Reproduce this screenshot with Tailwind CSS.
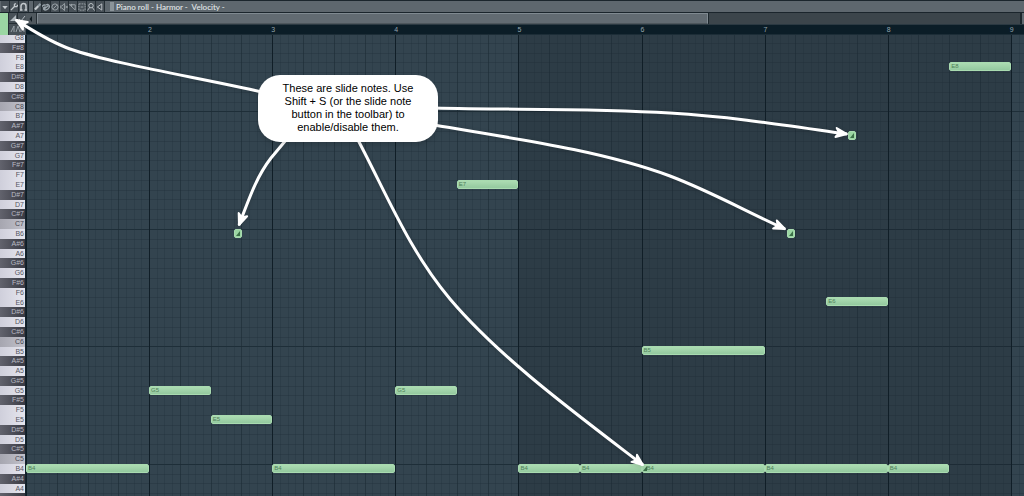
<!DOCTYPE html>
<html lang="en">
<head>
    <meta charset="UTF-8">
    <meta name="viewport" content="width=device-width, initial-scale=1.0">
    <title>Piano roll</title>
    <script src="https://cdn.jsdelivr.net/npm/@tailwindcss/browser@4"></script>
</head>
<body class="relative bg-[#33444f] font-['Liberation_Sans',sans-serif] overflow-x-hidden">
    <!-- Toolbar -->
    <header class="flex items-center h-[13px] bg-[#5e676e] border-t border-b border-[#1b252c] text-[#c3c9cd]">
        <div class="flex h-full pl-px">
            <button aria-label="Menu" class="w-[9px] bg-[#485158] border-r border-[#252e34]"><svg viewBox="0 0 9 9" class="w-full" fill="currentColor"><path d="M1.500 3.500h6L4.500 7z"/></svg></button>
            <button aria-label="Tools" class="w-[9px] bg-[#485158] border-r border-[#252e34]"><svg viewBox="0 0 9 9" class="w-full" fill="none" stroke="currentColor" stroke-width="1.500"><path d="M1 8l4-4M5 1v3h3M5 1.500l1.500-1M8 4l.5-2"/></svg></button>
            <button aria-label="Snap" class="w-[10px] bg-[#485158] border-r border-[#252e34]"><svg viewBox="0 0 9 9" class="w-full" fill="none" stroke="currentColor" stroke-width="1.500"><path d="M2 8.500V4a2.500 2.500 0 0 1 5 0v4.500M1 8h2.500M5.500 8H8"/></svg></button>
        </div>
        <div class="flex h-full ml-1 mr-1">
            <button aria-label="Draw" class="w-[9px] bg-[#485158] border-x border-[#252e34]"><svg viewBox="0 0 8 9" class="w-full" fill="none" stroke="currentColor" stroke-width="2.500"><path d="M1 7.500l4-4"/><path d="M5 3.500L7.500 1" stroke="#8f9ba3"/></svg></button>
            <button aria-label="Paint" class="w-[9px] bg-[#323a40] border-r border-[#252e34]"><svg viewBox="0 0 9 9" class="w-full" fill="none" stroke="#9aa4ab"><path d="M0 4c2-3 3-1 5-2s4 1 3 3-4 4-6 2l5-4M1 6l3-2" stroke-width="1.500"/></svg></button>
            <button aria-label="Delete" class="w-[9px] bg-[#485158] border-r border-[#252e34]"><svg viewBox="0 0 9 9" class="w-full" fill="none" stroke="#a1a9ae"><circle cx="4.500" cy="4.500" r="3.500"/><path d="M2.500 6.500l4-4"/></svg></button>
            <button aria-label="Mute" class="w-[9px] bg-[#485158] border-r border-[#252e34]"><svg viewBox="0 0 9 9" class="w-full" fill="none" stroke="#a1a9ae"><path d="M0 3.500h2l3-3v8l-3-3H0zM6 3l3 3M9 3L6 6"/></svg></button>
            <button aria-label="Slip" class="w-[9px] bg-[#485158] border-r border-[#252e34]"><svg viewBox="0 0 9 9" class="w-full" fill="none" stroke="#a1a9ae"><path d="M0 2h7v6M1 2l6 6M3 1v3"/></svg></button>
            <button aria-label="Select" class="w-[9px] bg-[#485158] border-r border-[#252e34]"><svg viewBox="0 0 9 9" class="w-full" fill="none" stroke="#a1a9ae"><path d="M1 1h7v7H1z" stroke-dasharray="2 1"/><path d="M3 4.500h3"/></svg></button>
            <button aria-label="Zoom" class="w-[9px] bg-[#485158] border-r border-[#252e34]"><svg viewBox="0 0 9 9" class="w-full" fill="none" stroke="currentColor"><circle cx="4.500" cy="3" r="2.500"/><path d="M3 5L.5 8.500M6 5l2.500 3.500"/></svg></button>
            <button aria-label="Play" class="w-[9px] bg-[#485158] border-r border-[#252e34]"><svg viewBox="0 0 9 9" class="w-full" fill="none" stroke="currentColor"><path d="M1.500 4.500L6.500 1v7z"/></svg></button>
        </div>
        <span class="w-1 h-[9px] ml-px bg-[#8b949a]"></span>
        <h1 class="ml-[2px] text-[8px] leading-[10px] font-medium whitespace-pre font-['Lato',sans-serif] text-[#e3e7ea]">Piano roll - Harmor -  Velocity -</h1>
    </header>

    <div class="flex h-[22px] bg-[#1f2b33]">
        <!-- Note colour and slide / porta switches -->
        <div class="w-2 bg-[#9bd6a3]"></div>
        <div class="w-[18px] flex flex-col border-l border-[#252e34] bg-[#485158] text-[#b4bcc1]">
            <div class="flex h-[11px] border-b border-[#252e34]">
                <button aria-label="Slide notes" class="flex-1 border-r border-[#252e34]"><svg viewBox="0 0 8 9" class="w-full" fill="currentColor"><path d="M1 7h6V1z"/></svg></button>
                <button aria-label="Portamento" class="flex-1"><svg viewBox="0 0 8 9" class="w-full" fill="none" stroke="currentColor"><path d="M1 5l2 2 4-5"/></svg></button>
            </div>
            <svg viewBox="0 0 17 10" class="w-full" fill="none" stroke="#98a1a7"><path d="M2 8l3-6v6M7 8l2-6 2 6M12 2v6M12 3l3 1v4"/></svg>
        </div>
        <div class="flex-1 min-w-0">
            <!-- Scroll bar -->
            <div class="flex h-[11px] bg-[#3c454b]">
                <button aria-label="Scroll left" class="w-[11px] shrink-0 bg-[#50595f] border-r border-[#252e34]"><svg viewBox="0 0 10 10" class="w-full" fill="#101a20"><path d="M6 2v6L3.500 5z"/></svg></button>
                <div class="w-[67.2%] bg-[#626b72] border border-[#808a91] border-b-[#4d565c]"></div>
                <div class="flex-1 border-l border-[#1c262c]"></div>
                <button aria-label="Scroll right" class="w-1 shrink-0 bg-[#626b72] border-l-2 border-[#1c262c]"></button>
            </div>
            <div id="ruler" class="relative h-[11px] bg-[#0b1d27] border-t border-[#2b3942] border-b border-b-[#1c2d37] text-[7px] leading-[9px] text-[#93a3ac]"></div>
        </div>
    </div>

    <main class="flex h-[461px] overflow-hidden">
        <div id="keys" class="flex flex-col w-[26px] h-[470px] -mt-[2px] text-[7px] leading-[10px] border-r border-[#15232c]"></div>
        <div id="roll" class="relative flex-1 h-[470px] -mt-[2px] bg-[#33444f]"></div>
    </main>

    <!-- Callout with its arrows -->
    <svg class="absolute left-0 top-0 w-[1024px] h-[496px] pointer-events-none drop-shadow-sm" viewBox="0 0 1024 496" fill="none" stroke="white" stroke-width="3" stroke-linejoin="round">
        <defs>
            <marker id="head" viewBox="0 0 14 12" refX="13" refY="6" markerWidth="14" markerHeight="12" markerUnits="userSpaceOnUse" orient="auto">
                <path d="M2 1.500L13 6 2 10.500 5 6z" fill="white" stroke="white" stroke-width="2"/>
            </marker>
        </defs>
        <path marker-end="url(#head)" d="M262 92C200 78 110 63 70 49C48 41 32 30 16 20"/>
        <path marker-end="url(#head)" d="M286 140L271 158C257 176 250 196 239 225"/>
        <path marker-end="url(#head)" d="M358 140C388 197 409 250 450 299C500 358 575 413 643 465"/>
        <path marker-end="url(#head)" d="M434 108C510 110 590 108 670 113C735 117 790 126 847 134"/>
        <path marker-end="url(#head)" d="M434 125C510 138 600 150 670 176C712 192 745 211 785 229"/>
    </svg>
    <p class="absolute left-[258px] top-[75px] w-[180px] h-[67px] rounded-[22px] bg-white pt-[7px] text-center text-[11px] leading-[13px] text-black shadow-md">These are slide notes. Use<br>Shift + S (or the slide note<br>button in the toolbar) to<br>enable/disable them.</p>

    <script>
        const BAR = 12.335; // width of one bar, percent of the roll
        const ROWS = 48;
        const names = ["G", "F#", "F", "E", "D#", "D", "C#", "C", "B", "A#", "A", "G#"];
        const keys = document.getElementById("keys");
        const roll = document.getElementById("roll");
        const ruler = document.getElementById("ruler");

        function add(parent, className, style, text) {
            const el = document.createElement("div");
            el.className = className;
            el.style.cssText = style || "";
            el.textContent = text || "";
            parent.appendChild(el);
            return el;
        }

        // keyboard and row lines, G8 down to G#4
        for (let i = 0; i < ROWS; i++) {
            const name = names[i % 12];
            const octave = 8 - Math.floor((i + 4) / 12);
            let look = "bg-linear-to-r from-[#cfcfdb] to-[#e6e6ee] text-[#55555f]";
            if (name.includes("#")) look = "bg-linear-to-r from-[#62636d] to-[#393a43] text-[#b9bac4]";
            if (name === "C") look = "bg-linear-to-r from-[#a6a6b0] to-[#c1c1ca] text-[#45454f]";
            // the last key only peeks in, so it has no label
            add(keys, "flex-1 min-h-0 pr-px text-right " + look, "", i < ROWS - 1 ? name + octave : "");
            const top = "top:" + (i / ROWS * 100) + "%";
            add(roll, "absolute inset-x-0 h-px " + (name === "B" ? "bg-[#1e2e38]" : "bg-[#2c3c47]"), top);
        }

        // darker second group of four bars
        add(roll, "absolute inset-y-0 bg-[#1a242b]/25", "left:" + BAR * 4 + "%;width:" + BAR * 4 + "%");

        // sixteen steps to a bar
        for (let i = 0; i <= 129; i++) {
            let look = "bg-[#22323d]/30";
            if (i % 4 === 0) look = "bg-[#1c2c36]/60";
            if (i % 16 === 0) look = "bg-[#101e27]";
            add(roll, "absolute inset-y-0 w-px " + look, "left:" + (i / 16 * BAR) + "%");
        }

        for (let bar = 1; bar <= 8; bar++) {
            add(ruler, "absolute top-0 -ml-px", "left:" + bar * BAR + "%", String(bar + 1));
        }

        // name, row, start and length in bars
        const notes = [
            ["B4", 44, 0, 1], ["G5", 36, 1, 0.5], ["E5", 39, 1.5, 0.5], ["B4", 44, 2, 1],
            ["G5", 36, 3, 0.5], ["E7", 15, 3.5, 0.5], ["B4", 44, 4, 0.5], ["B4", 44, 4.5, 0.5],
            ["B4", 44, 5, 1], ["B5", 32, 5, 1], ["B4", 44, 6, 1], ["E6", 27, 6.5, 0.5],
            ["B4", 44, 7, 0.5], ["E8", 3, 7.5, 0.5]
        ];
        notes.forEach(([name, row, start, length]) => {
            const slideFirst = row === 44 && start === 5;
            add(roll, "absolute h-[9px] rounded-[2px] bg-linear-to-b from-[#acdcb2] to-[#94c99f] border border-[#a9dbb0] text-[6px] leading-[7px] text-[#4f8059] " + (slideFirst ? "pl-1" : "pl-px"),
                "top:" + (row / ROWS * 100) + "%;left:" + start * BAR + "%;width:" + length * BAR + "%", name);
        });

        // slide notes: row, start in bars
        [[20, 1.69], [20, 6.18], [10, 6.68], [44, 5]].forEach(([row, start]) => {
            const el = add(roll, "absolute w-[8px] h-[9px] rounded-[2px] bg-[#9bd6a3] border border-[#a9dbb0]",
                "top:" + (row / ROWS * 100) + "%;left:" + start * BAR + "%");
            el.innerHTML = '<svg viewBox="0 0 6 7" class="w-full h-full" fill="#3c7048"><path d="M1 6h4V1z"/></svg>';
            if (row === 44) el.className = "absolute w-[6px] h-[9px] py-px";
        });
    </script>
</body>
</html>
